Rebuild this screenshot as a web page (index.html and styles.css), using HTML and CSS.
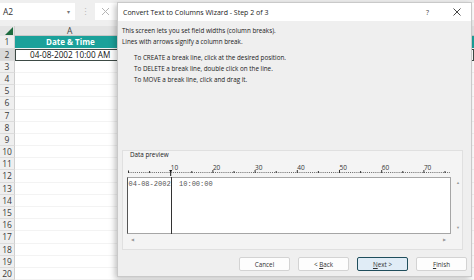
FILE: index.html
```html
<!DOCTYPE html>
<html lang="en">
<head>
    <meta charset="UTF-8">
    <title>Convert Text to Columns Wizard</title>
    <link rel="stylesheet" href="styles.css">
</head>
<body>
    <div class="excel">
        <div class="toolbar">
            <div class="name-box">
                <span>A2</span>
                <span class="caret">&#9662;</span>
            </div>
            <span class="grip">&#8942;</span>
            <div class="formula">
                <svg width="9" height="9" viewBox="0 0 9 9"><path d="M1 1 L8 8 M8 1 L1 8" stroke="#b5b5b5" stroke-width="1"/></svg>
            </div>
        </div>
        <div class="sheet">
            <div class="corner"><span class="tri"></span></div>
            <div class="col-head">A</div>

            <div class="row-head">1</div>
            <div class="cell head-cell">Date &amp; Time</div>
            <div class="row-head active">2</div>
            <div class="cell value-cell">04-08-2002 10:00 AM</div>
            <div class="row-head">3</div><div class="cell"></div>
            <div class="row-head">4</div><div class="cell"></div>
            <div class="row-head">5</div><div class="cell"></div>
            <div class="row-head">6</div><div class="cell"></div>
            <div class="row-head">7</div><div class="cell"></div>
            <div class="row-head">8</div><div class="cell"></div>
            <div class="row-head">9</div><div class="cell"></div>
            <div class="row-head">10</div><div class="cell"></div>
            <div class="row-head">11</div><div class="cell"></div>
            <div class="row-head">12</div><div class="cell"></div>
            <div class="row-head">13</div><div class="cell"></div>
            <div class="row-head">14</div><div class="cell"></div>
            <div class="row-head">15</div><div class="cell"></div>
            <div class="row-head">16</div><div class="cell"></div>
            <div class="row-head">17</div><div class="cell"></div>
            <div class="row-head">18</div><div class="cell"></div>
            <div class="row-head">19</div><div class="cell"></div>
            <div class="row-head">20</div><div class="cell"></div>
        </div>
    </div>

    <div class="dialog">
        <div class="title-bar">
            <span class="title">Convert Text to Columns Wizard - Step 2 of 3</span>
            <span class="help">?</span>
            <svg class="close" width="8" height="8" viewBox="0 0 8 8"><path d="M0.5 0.5 L7.5 7.5 M7.5 0.5 L0.5 7.5" stroke="#333" stroke-width="0.9"/></svg>
        </div>
        <div class="dialog-body">
            <p class="intro">This screen lets you set field widths (column breaks).<br>Lines with arrows signify a column break.</p>
            <p class="steps">To CREATE a break line, click at the desired position.<br>To DELETE a break line, double click on the line.<br>To MOVE a break line, click and drag it.</p>

            <div class="group">
                <div class="group-label">Data preview</div>
                <svg class="ruler" width="334" height="14" viewBox="0 0 334 14">
                    <line x1="1.5" y1="10.5" x2="323" y2="10.5" stroke="#666" stroke-width="1" stroke-dasharray="1 1.11"/>
                    <g stroke="#333" stroke-width="1">
                        <line x1="1.5" y1="8.5" x2="1.5" y2="11"/>
                        <line x1="22.6" y1="9" x2="22.6" y2="11"/>
                        <line x1="64.8" y1="9" x2="64.8" y2="11"/>
                        <line x1="107" y1="9" x2="107" y2="11"/>
                        <line x1="149.2" y1="9" x2="149.2" y2="11"/>
                        <line x1="191.4" y1="9" x2="191.4" y2="11"/>
                        <line x1="233.6" y1="9" x2="233.6" y2="11"/>
                        <line x1="275.8" y1="9" x2="275.8" y2="11"/>
                        <line x1="318" y1="9" x2="318" y2="11"/>
                        <line x1="85.9" y1="8" x2="85.9" y2="11"/>
                        <line x1="128.1" y1="8" x2="128.1" y2="11"/>
                        <line x1="170.3" y1="8" x2="170.3" y2="11"/>
                        <line x1="212.5" y1="8" x2="212.5" y2="11"/>
                        <line x1="254.7" y1="8" x2="254.7" y2="11"/>
                        <line x1="296.9" y1="8" x2="296.9" y2="11"/>
                    </g>
                    <path d="M42.2 8 L45.2 8 L43.7 11 Z M43.2 10 H44.2 V14 H43.2 Z" fill="#111"/>
                    <g class="ruler-num">
                        <text x="43.7" y="8">10</text>
                        <text x="85.9" y="8">20</text>
                        <text x="128.1" y="8">30</text>
                        <text x="170.3" y="8">40</text>
                        <text x="212.5" y="8">50</text>
                        <text x="254.7" y="8">60</text>
                        <text x="296.9" y="8">70</text>
                    </g>
                </svg>
                <div class="preview">
                    <div class="preview-box">
                        <pre class="preview-text">04-08-2002  10:00:00</pre>
                        <span class="break-line"></span>
                    </div>
                    <div class="vscroll">
                        <span>&#9650;</span>
                        <span>&#9660;</span>
                    </div>
                    <div class="hscroll">
                        <span>&#9664;</span>
                        <span>&#9654;</span>
                    </div>
                </div>
            </div>

            <div class="buttons">
                <button class="btn">Cancel</button>
                <button class="btn">&lt; <u>B</u>ack</button>
                <button class="btn btn-default"><u>N</u>ext &gt;</button>
                <button class="btn"><u>F</u>inish</button>
            </div>
        </div>
    </div>
</body>
</html>
```

FILE: styles.css
```css
* {
    box-sizing: border-box;
}

body {
    margin: 0;
    width: 474px;
    height: 280px;
    overflow: hidden;
    position: relative;
    background-color: #ffffff;
    font-family: "Open Sans", "Noto Sans", sans-serif;
    color: #222222;
}

/* Excel side */
.toolbar {
    height: 26px;
    background-color: #efefef;
    display: flex;
    align-items: flex-start;
    padding-top: 3px;
}

.name-box {
    width: 75px;
    height: 17px;
    background-color: #ffffff;
    display: flex;
    align-items: center;
    justify-content: space-between;
    padding: 0 5px 0 3px;
    font-size: 8.5px;
    color: #333333;
}

.caret {
    font-size: 6px;
    color: #777777;
}

.grip {
    width: 20px;
    text-align: center;
    font-size: 9px;
    line-height: 17px;
    color: #bbbbbb;
}

.formula {
    flex: 1;
    height: 17px;
    background-color: #ffffff;
    display: flex;
    align-items: center;
    padding-left: 6px;
}

.sheet {
    display: grid;
    grid-template-columns: 15px 1fr;
    grid-template-rows: 10.4px;
    grid-auto-rows: 12.2px;
}

.corner {
    background-color: #e4e4e4;
    border-right: 1px solid #cfcfcf;
    position: relative;
}

.tri {
    position: absolute;
    right: 1px;
    bottom: 1px;
    width: 0;
    height: 0;
    border-left: 8px solid transparent;
    border-bottom: 8px solid #1d6b3f;
}

.col-head {
    background-color: #e4e4e4;
    border-bottom: 1px solid #c8c8c8;
    font-size: 8.5px;
    line-height: 10px;
    color: #444444;
    padding-left: 52px;
}

.row-head {
    background-color: #efefef;
    border-right: 1px solid #cfcfcf;
    border-bottom: 1px solid #dcdcdc;
    font-size: 8.5px;
    line-height: 11.5px;
    text-align: center;
    color: #3a3a3a;
}

.row-head.active {
    background-color: #d9d9d9;
}

.cell {
    border-bottom: 1px solid #f3f3f3;
}

.head-cell {
    background-color: #1ba19a;
    color: #ffffff;
    font-weight: bold;
    font-size: 8px;
    line-height: 11px;
    padding-left: 31px;
}

.value-cell {
    border: 1px solid #3d4a45;
    font-size: 8.2px;
    line-height: 10px;
    padding-left: 14px;
    color: #111111;
}

/* Wizard dialog */
.dialog {
    position: absolute;
    left: 117px;
    top: 2px;
    width: 355px;
    height: 275px;
    background-color: #efefef;
    border: 1px solid #c9c9c9;
    box-shadow: -2px 2px 6px rgba(0, 0, 0, 0.25);
}

.title-bar {
    height: 18px;
    background-color: #ffffff;
    display: flex;
    align-items: center;
    padding-left: 5px;
}

.title {
    flex: 1;
    font-size: 7px;
    color: #222222;
}

.help {
    font-size: 7px;
    color: #444444;
    width: 27px;
}

.close {
    margin-right: 10px;
}

.dialog-body {
    padding: 4px 4px 0 4px;
}

.intro, .steps {
    margin: 0;
    font-size: 6.3px;
    line-height: 11px;
    color: #1a1a1a;
}

.steps {
    margin-top: 5px;
    padding-left: 12px;
}

.group {
    margin-top: 65px;
    width: 341px;
    height: 100px;
    background-color: #f4f4f4;
    border: 1px solid #e0e0e0;
    padding-left: 4px;
}

.group-label {
    font-size: 6.3px;
    line-height: 8px;
    padding-left: 3px;
    color: #1a1a1a;
}

.ruler {
    display: block;
    margin-top: 3px;
}

.ruler-num {
    font-family: "Open Sans", sans-serif;
    font-size: 6.5px;
    fill: #333333;
}

.preview {
    margin-top: 1px;
    display: grid;
    grid-template-columns: 324px 12px;
    grid-template-rows: 57px 10px;
}

.preview-box {
    position: relative;
    background-color: #ffffff;
    border: 1px solid #a6a6a6;
    border-left-color: #555555;
}

.preview-text {
    margin: 0;
    padding: 2px 0 0 0.5px;
    font-family: "Liberation Mono", "Courier New", monospace;
    font-size: 7.03px;
    line-height: 8px;
    color: #555555;
}

.break-line {
    position: absolute;
    left: 42.7px;
    top: -1px;
    bottom: -1px;
    width: 1px;
    background-color: #333333;
}

.vscroll {
    display: flex;
    flex-direction: column;
    justify-content: space-between;
    align-items: center;
    padding: 3px 0 4px 2px;
    font-size: 4px;
    color: #9a9a9a;
}

.hscroll {
    display: flex;
    justify-content: space-between;
    align-items: center;
    padding: 0 5px 0 4px;
    font-size: 4px;
    color: #9a9a9a;
}

.buttons {
    margin-top: 7px;
    display: flex;
    justify-content: flex-end;
    gap: 8px;
}

.btn {
    width: 51px;
    height: 14px;
    padding: 0;
    background-color: #fdfdfd;
    border: 1px solid #d3d3d3;
    border-radius: 2px;
    font-family: "Open Sans", sans-serif;
    font-size: 6.3px;
    color: #333333;
}

.btn-default {
    background-color: #e0ecf6;
    border: 1.5px solid #1f4e5c;
}
```
